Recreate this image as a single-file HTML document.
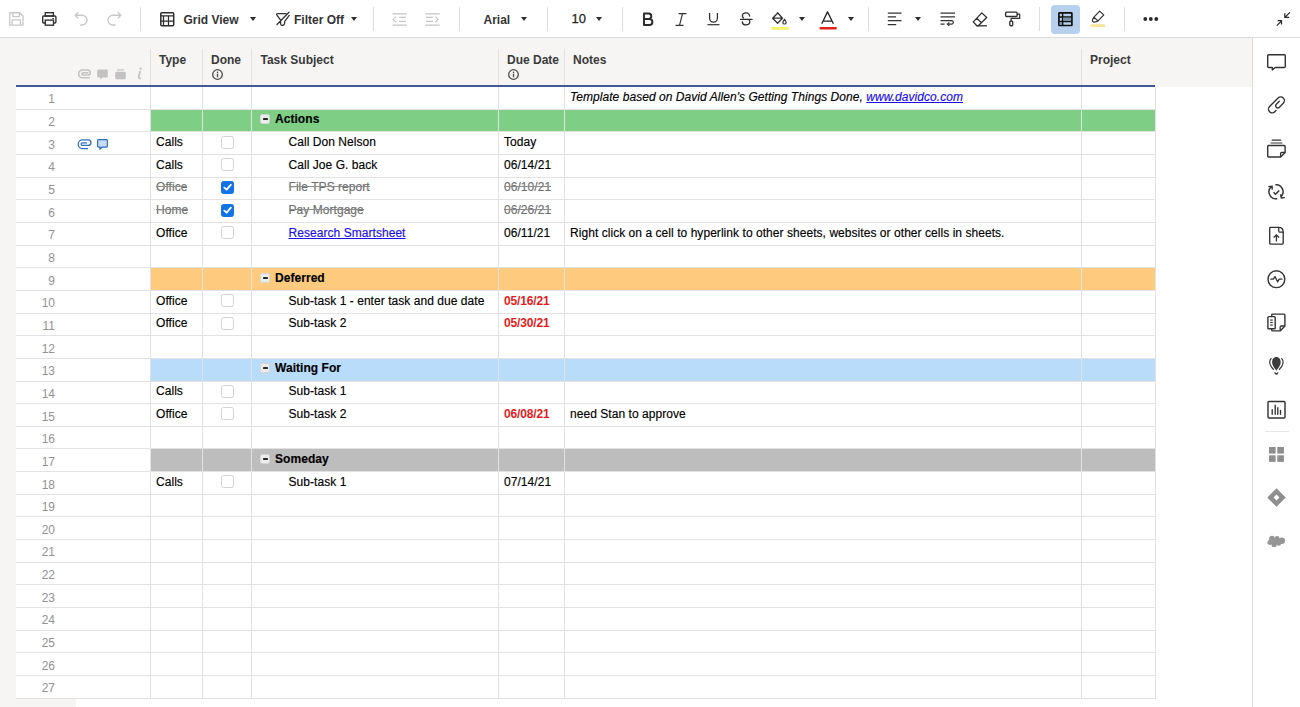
<!DOCTYPE html>
<html><head><meta charset="utf-8">
<style>
*{margin:0;padding:0;box-sizing:border-box}
html,body{width:1300px;height:707px;overflow:hidden;background:#fff;font-family:"Liberation Sans",sans-serif;position:relative}
.abs{position:absolute}
#tb{position:absolute;left:0;top:0;width:1300px;height:37px;background:#fff}
#tbb{position:absolute;left:0;top:37px;width:1300px;height:1px;background:#dcdcdc}
.sep{position:absolute;top:7px;width:1px;height:24px;background:#dddddd}
.tt{position:absolute;top:12.8px;font-size:12px;font-weight:bold;color:#333;line-height:14px;white-space:nowrap}
.dd{position:absolute;top:16.5px;width:0;height:0;border-left:3px solid transparent;border-right:3px solid transparent;border-top:4.2px solid #2d2d2d}
.ic{position:absolute}
#bgL{position:absolute;left:0;top:38px;width:1252px;height:669px;background:#f6f5f3}
#gridwhite{position:absolute;left:16px;top:87px;width:1236px;height:620px;background:#fff}
#gut{position:absolute;left:0;top:87px;width:16px;height:620px;background:#f6f5f3}
#botgut{position:absolute;left:0;top:699px;width:76px;height:8px;background:#f6f5f3}
#blue{position:absolute;left:16px;top:85px;width:1139px;height:2px;background:#425896}
.hdrt{position:absolute;top:52.7px;font-size:12px;font-weight:bold;color:#3a3a3a;line-height:14px;white-space:nowrap}
.hvl{position:absolute;top:49px;width:1px;height:36px;background:#e3e2df}
.info{position:absolute;top:69px;width:11px;height:11px;border:1.2px solid #555;border-radius:50%}
.info:after{content:"";position:absolute;left:3.6px;top:3.4px;width:1.3px;height:3.6px;background:#555}
.info:before{content:"";position:absolute;left:3.6px;top:1.6px;width:1.3px;height:1.1px;background:#555}
.bg{position:absolute;left:150px;width:1005px}
.hl{position:absolute;left:16px;width:1139px;height:1px;background:#e2e2e2}
.vl{position:absolute;top:87px;width:1px;height:612px;background:#e2e2e2}
.rn{position:absolute;left:0;width:55px;text-align:right;font-size:12px;color:#929292;line-height:14px}
.t{position:absolute;font-size:12px;color:#000;line-height:14px;white-space:nowrap;letter-spacing:0.05px;-webkit-text-stroke:0.15px currentColor}
.t.pt{font-weight:bold;color:#000}
.t.st{color:#6f6f6f}.t.st:after{content:"";position:absolute;left:0;right:0;top:6.2px;height:1px;background:#8c8c8c}
.t.red{color:#e31d1d;font-weight:bold;letter-spacing:-0.15px;-webkit-text-stroke:0}
.lnk{color:#1a0dea;text-decoration:underline}
.ck{position:absolute;left:221px;width:13px;height:13px;border:1px solid #d3d3d3;border-radius:2.5px;background:#fff}
.ck.on{background:#1173e6;border-color:#1173e6}
.ck svg{position:absolute;left:-1px;top:-1px}
.cbx{position:absolute;left:259.5px;width:10px;height:10px;background:#ececec;border:0.8px solid #d6d6d6;border-radius:2.2px}
.cbx b{position:absolute;left:2px;top:3.2px;width:5px;height:2px;background:#2a2a2a;border-radius:0.4px}
.ric{position:absolute}
#sb{position:absolute;left:1252px;top:38px;width:1px;height:669px;background:#dedede}
#sbw{position:absolute;left:1253px;top:38px;width:47px;height:669px;background:#fff}
.si{position:absolute;left:1266px}
</style></head><body>
<div id="bgL"></div>
<div id="gridwhite"></div>
<div id="gut"></div>
<div id="botgut"></div>

<div class="bg" style="top:109.2px;height:22.65px;background:#7ecf85"></div>
<div class="bg" style="top:267.75px;height:22.65px;background:#fdca7e"></div>
<div class="bg" style="top:358.35px;height:22.65px;background:#b8dcfa"></div>
<div class="bg" style="top:448.95px;height:22.65px;background:#bdbdbd"></div>
<div class="hl" style="top:108.7px"></div>
<div class="hl" style="top:131.35px"></div>
<div class="hl" style="top:154px"></div>
<div class="hl" style="top:176.65px"></div>
<div class="hl" style="top:199.3px"></div>
<div class="hl" style="top:221.95px"></div>
<div class="hl" style="top:244.6px"></div>
<div class="hl" style="top:267.25px"></div>
<div class="hl" style="top:289.9px"></div>
<div class="hl" style="top:312.55px"></div>
<div class="hl" style="top:335.2px"></div>
<div class="hl" style="top:357.85px"></div>
<div class="hl" style="top:380.5px"></div>
<div class="hl" style="top:403.15px"></div>
<div class="hl" style="top:425.8px"></div>
<div class="hl" style="top:448.45px"></div>
<div class="hl" style="top:471.1px"></div>
<div class="hl" style="top:493.75px"></div>
<div class="hl" style="top:516.4px"></div>
<div class="hl" style="top:539.05px"></div>
<div class="hl" style="top:561.7px"></div>
<div class="hl" style="top:584.35px"></div>
<div class="hl" style="top:607px"></div>
<div class="hl" style="top:629.65px"></div>
<div class="hl" style="top:652.3px"></div>
<div class="hl" style="top:674.95px"></div>
<div class="hl" style="top:697.6px"></div>
<div class="vl" style="left:150px"></div>
<div class="vl" style="left:202px"></div>
<div class="vl" style="left:251px"></div>
<div class="vl" style="left:498px"></div>
<div class="vl" style="left:564px"></div>
<div class="vl" style="left:1081px"></div>
<div class="vl" style="left:1155px"></div>

<div id="blue"></div>

<!-- header -->
<div class="hvl" style="left:150px"></div>
<div class="hvl" style="left:202px"></div>
<div class="hvl" style="left:251px"></div>
<div class="hvl" style="left:498px"></div>
<div class="hvl" style="left:564px"></div>
<div class="hvl" style="left:1081px"></div>
<div class="hdrt" style="left:159px">Type</div>
<div class="hdrt" style="left:211px">Done</div>
<div class="hdrt" style="left:260.5px">Task Subject</div>
<div class="hdrt" style="left:507px">Due Date</div>
<div class="hdrt" style="left:573px">Notes</div>
<div class="hdrt" style="left:1090px">Project</div>
<svg class="ic" style="left:212px;top:69px" width="11" height="11" viewBox="0 0 11 11"><circle cx="5.5" cy="5.5" r="4.8" fill="none" stroke="#4a4a4a" stroke-width="1.3"/><rect x="4.85" y="2.7" width="1.3" height="1.3" fill="#4a4a4a"/><rect x="4.85" y="4.7" width="1.3" height="3.6" fill="#4a4a4a"/></svg>
<svg class="ic" style="left:508px;top:69px" width="11" height="11" viewBox="0 0 11 11"><circle cx="5.5" cy="5.5" r="4.8" fill="none" stroke="#4a4a4a" stroke-width="1.3"/><rect x="4.85" y="2.7" width="1.3" height="1.3" fill="#4a4a4a"/><rect x="4.85" y="4.7" width="1.3" height="3.6" fill="#4a4a4a"/></svg>

<!-- header left icons -->
<svg class="ic" style="left:78px;top:68px" width="14" height="11" viewBox="0 0 14 11"><path d="M11.8 9.8 H4.6 A3.9 3.9 0 0 1 4.6 2 H9.8 A2.5 2.5 0 0 1 9.8 7 H5 A1.1 1.1 0 0 1 5 4.8 H10.3" fill="none" stroke="#c2c2c2" stroke-width="1.6"/></svg>
<svg class="ic" style="left:97px;top:68.5px" width="11" height="12" viewBox="0 0 11 12"><path d="M1 0.6 H10 A0.8 0.8 0 0 1 10.8 1.4 V7.6 A0.8 0.8 0 0 1 10 8.4 H5.4 L3.4 10.8 V8.4 H1 A0.8 0.8 0 0 1 0.2 7.6 V1.4 A0.8 0.8 0 0 1 1 0.6 Z" fill="#c2c2c2"/></svg>
<svg class="ic" style="left:115px;top:68.5px" width="11" height="11" viewBox="0 0 11 11"><rect x="2" y="0.3" width="7" height="1.2" fill="#c2c2c2"/><rect x="0.2" y="2.8" width="10.6" height="7.4" rx="1.2" fill="#c2c2c2"/></svg>
<svg class="ic" style="left:135px;top:66px" width="8" height="14" viewBox="0 0 8 14"><circle cx="5.6" cy="2.7" r="1.15" fill="#c2c2c2"/><path d="M5.1 5.6 L3.7 10.8 Q3.4 12.4 5.2 12.3" fill="none" stroke="#c2c2c2" stroke-width="1.75" stroke-linecap="round"/></svg>

<div class="rn" style="top:92.45px">1</div>
<div class="t" style="top:89.65px;left:570px"><i>Template based on David Allen's Getting Things Done, <u class="lnk">www.davidco.com</u></i></div>
<div class="rn" style="top:115.1px">2</div>
<div class="cbx" style="top:114.1px"><b></b></div>
<div class="t pt" style="top:112.3px;left:275px">Actions</div>
<div class="rn" style="top:137.75px">3</div>
<div class="t" style="top:134.95px;left:156px">Calls</div>
<div class="ck" style="top:135.65px"></div>
<div class="t" style="top:134.95px;left:288.5px">Call Don Nelson</div>
<div class="t" style="top:134.95px;left:504px">Today</div>
<svg class="ric" style="left:77px;top:138.85px" width="16" height="12" viewBox="0 0 16 12"><path d="M11 9.65 H5.5 A4.35 4.35 0 0 1 5.5 0.95 H11.2 A2.75 2.75 0 0 1 11.2 6.45 H5.5 A1.35 1.35 0 0 1 5.5 3.75 H10" fill="none" stroke="#2d6fc4" stroke-width="1.25"/></svg>
<svg class="ric" style="left:97px;top:138.85px" width="11" height="11" viewBox="0 0 11 11"><path d="M1.5 0.7 H9.5 A0.9 0.9 0 0 1 10.4 1.6 V7.2 A0.9 0.9 0 0 1 9.5 8.1 H5 L3 10.2 V8.1 H1.5 A0.9 0.9 0 0 1 0.6 7.2 V1.6 A0.9 0.9 0 0 1 1.5 0.7 Z" fill="#c9dcf3" stroke="#2d6fc4" stroke-width="1.2"/></svg>
<div class="rn" style="top:160.4px">4</div>
<div class="t" style="top:157.6px;left:156px">Calls</div>
<div class="ck" style="top:158.3px"></div>
<div class="t" style="top:157.6px;left:288.5px">Call Joe G. back</div>
<div class="t" style="top:157.6px;left:504px">06/14/21</div>
<div class="rn" style="top:183.05px">5</div>
<div class="t st" style="top:180.25px;left:156px">Office</div>
<div class="ck on" style="top:180.95px"><svg width="13" height="13" viewBox="0 0 13 13"><path d="M3.3 6.6 L5.6 8.7 L9.9 3.7" fill="none" stroke="#fff" stroke-width="1.8" stroke-linecap="round" stroke-linejoin="round"/></svg></div>
<div class="t st" style="top:180.25px;left:288.5px">File TPS report</div>
<div class="t st" style="top:180.25px;left:504px">06/10/21</div>
<div class="rn" style="top:205.7px">6</div>
<div class="t st" style="top:202.9px;left:156px">Home</div>
<div class="ck on" style="top:203.6px"><svg width="13" height="13" viewBox="0 0 13 13"><path d="M3.3 6.6 L5.6 8.7 L9.9 3.7" fill="none" stroke="#fff" stroke-width="1.8" stroke-linecap="round" stroke-linejoin="round"/></svg></div>
<div class="t st" style="top:202.9px;left:288.5px">Pay Mortgage</div>
<div class="t st" style="top:202.9px;left:504px">06/26/21</div>
<div class="rn" style="top:228.35px">7</div>
<div class="t" style="top:225.55px;left:156px">Office</div>
<div class="ck" style="top:226.25px"></div>
<div class="t" style="top:225.55px;left:288.5px"><u class="lnk">Research Smartsheet</u></div>
<div class="t" style="top:225.55px;left:504px">06/11/21</div>
<div class="t" style="top:225.55px;left:570px">Right click on a cell to hyperlink to other sheets, websites or other cells in sheets.</div>
<div class="rn" style="top:251px">8</div>
<div class="rn" style="top:273.65px">9</div>
<div class="cbx" style="top:272.65px"><b></b></div>
<div class="t pt" style="top:270.85px;left:275px">Deferred</div>
<div class="rn" style="top:296.3px">10</div>
<div class="t" style="top:293.5px;left:156px">Office</div>
<div class="ck" style="top:294.2px"></div>
<div class="t" style="top:293.5px;left:288.5px">Sub-task 1 - enter task and due date</div>
<div class="t red" style="top:293.5px;left:504px">05/16/21</div>
<div class="rn" style="top:318.95px">11</div>
<div class="t" style="top:316.15px;left:156px">Office</div>
<div class="ck" style="top:316.85px"></div>
<div class="t" style="top:316.15px;left:288.5px">Sub-task 2</div>
<div class="t red" style="top:316.15px;left:504px">05/30/21</div>
<div class="rn" style="top:341.6px">12</div>
<div class="rn" style="top:364.25px">13</div>
<div class="cbx" style="top:363.25px"><b></b></div>
<div class="t pt" style="top:361.45px;left:275px">Waiting For</div>
<div class="rn" style="top:386.9px">14</div>
<div class="t" style="top:384.1px;left:156px">Calls</div>
<div class="ck" style="top:384.8px"></div>
<div class="t" style="top:384.1px;left:288.5px">Sub-task 1</div>
<div class="rn" style="top:409.55px">15</div>
<div class="t" style="top:406.75px;left:156px">Office</div>
<div class="ck" style="top:407.45px"></div>
<div class="t" style="top:406.75px;left:288.5px">Sub-task 2</div>
<div class="t red" style="top:406.75px;left:504px">06/08/21</div>
<div class="t" style="top:406.75px;left:570px">need Stan to approve</div>
<div class="rn" style="top:432.2px">16</div>
<div class="rn" style="top:454.85px">17</div>
<div class="cbx" style="top:453.85px"><b></b></div>
<div class="t pt" style="top:452.05px;left:275px">Someday</div>
<div class="rn" style="top:477.5px">18</div>
<div class="t" style="top:474.7px;left:156px">Calls</div>
<div class="ck" style="top:475.4px"></div>
<div class="t" style="top:474.7px;left:288.5px">Sub-task 1</div>
<div class="t" style="top:474.7px;left:504px">07/14/21</div>
<div class="rn" style="top:500.15px">19</div>
<div class="rn" style="top:522.8px">20</div>
<div class="rn" style="top:545.45px">21</div>
<div class="rn" style="top:568.1px">22</div>
<div class="rn" style="top:590.75px">23</div>
<div class="rn" style="top:613.4px">24</div>
<div class="rn" style="top:636.05px">25</div>
<div class="rn" style="top:658.7px">26</div>
<div class="rn" style="top:681.35px">27</div>

<!-- toolbar -->
<div id="tb"></div>
<div id="tbb"></div>
<!-- save -->
<svg class="ic" style="left:9px;top:12px" width="15" height="15" viewBox="0 0 15 15"><path d="M0.75 0.75 H10.5 L14 4.2 V13.1 H0.75 Z" fill="none" stroke="#c8c8c8" stroke-width="1.3" stroke-linejoin="round"/><path d="M3.9 0.75 V4.6 H10.4 V0.75 M3.2 13.1 V7.8 H11.4 V13.1" fill="none" stroke="#c8c8c8" stroke-width="1.3"/></svg>
<!-- print -->
<svg class="ic" style="left:41.5px;top:12px" width="15" height="15" viewBox="0 0 15 15"><rect x="3.3" y="0.7" width="8.1" height="3.3" fill="none" stroke="#333" stroke-width="1.4"/><path d="M3 11 H1.6 A0.9 0.9 0 0 1 0.7 10.1 V4.9 A0.9 0.9 0 0 1 1.6 4 H13 A0.9 0.9 0 0 1 13.9 4.9 V10.1 A0.9 0.9 0 0 1 13 11 H11.6" fill="none" stroke="#333" stroke-width="1.4"/><rect x="3.3" y="8.1" width="8.2" height="5.1" fill="#fff" stroke="#333" stroke-width="1.4"/><rect x="10.3" y="6.1" width="1.7" height="0.9" fill="#333"/></svg>
<!-- undo -->
<svg class="ic" style="left:74px;top:12px" width="16" height="16" viewBox="0 0 16 16"><path d="M1.3 3.25 H8.2 A4.875 4.875 0 0 1 8.2 13 H6.2 M4.2 0.3 L1.2 3.25 L4.2 6.2" fill="none" stroke="#c8c8c8" stroke-width="1.35"/></svg>
<!-- redo -->
<svg class="ic" style="left:107px;top:12px" width="16" height="16" viewBox="0 0 16 16"><path d="M13.7 3.25 H5.8 A4.875 4.875 0 0 0 5.8 13 H8.5 M10.8 0.3 L13.8 3.25 L10.8 6.2" fill="none" stroke="#c8c8c8" stroke-width="1.35"/></svg>
<div class="sep" style="left:140px"></div>
<!-- grid view -->
<svg class="ic" style="left:160px;top:12px" width="15" height="15" viewBox="0 0 15 15"><rect x="0.8" y="0.8" width="12.9" height="12.9" rx="1" fill="none" stroke="#2d2d2d" stroke-width="1.5"/><path d="M0.8 3.9 H13.7 M0.8 9.1 H13.7 M3.5 3.9 V13.7 M8.5 3.9 V13.7" stroke="#2d2d2d" stroke-width="1.3"/></svg>
<div class="tt" style="left:183.5px">Grid View</div>
<div class="dd" style="left:249.5px"></div>
<!-- filter off -->
<svg class="ic" style="left:270px;top:5px" width="30" height="30" viewBox="0 0 30 30"><path d="M16 8.6 H7.6 Q6.2 8.6 6.8 9.8 L10.6 15.2 V19 Q10.8 20.6 12.4 20.5 Q14.6 20.2 14.6 18.6 V16.6 L19.2 10.4 M7 19.5 L19 7.3" fill="none" stroke="#333" stroke-width="1.3" stroke-linejoin="round" stroke-linecap="round"/></svg>
<div class="tt" style="left:294px">Filter Off</div>
<div class="dd" style="left:350.5px"></div>
<div class="sep" style="left:373px"></div>
<!-- outdent / indent -->
<svg class="ic" style="left:392px;top:12.5px" width="15" height="14" viewBox="0 0 15 14"><path d="M0.6 0.9 H14.7 M7 4.4 H13.9 M7 8.4 H13.9 M0.6 12.1 H14.7" stroke="#c6c6c6" stroke-width="1.1"/><path d="M3.8 3.6 L1.2 6.4 L3.8 9.3" fill="none" stroke="#c6c6c6" stroke-width="1.1"/></svg>
<svg class="ic" style="left:425px;top:12.5px" width="15" height="14" viewBox="0 0 15 14"><path d="M0.2 0.9 H14.7 M0.9 4.4 H8 M0.9 8.4 H8 M0.2 12.1 H14.7" stroke="#c6c6c6" stroke-width="1.1"/><path d="M10.4 3.6 L13.1 6.4 L10.4 9.3" fill="none" stroke="#c6c6c6" stroke-width="1.1"/></svg>
<div class="sep" style="left:458.5px"></div>
<div class="tt" style="left:483.5px">Arial</div>
<div class="dd" style="left:521px"></div>
<div class="sep" style="left:546.5px"></div>
<div class="tt" style="left:571.5px;font-weight:normal;font-size:13px;top:12.3px;color:#222;-webkit-text-stroke:0.25px #222">10</div>
<div class="dd" style="left:596px"></div>
<div class="sep" style="left:622px"></div>
<!-- B I U S -->
<svg class="ic" style="left:635px;top:5px" width="30" height="30" viewBox="0 0 30 30"><path d="M13.6 13.9 A2.7 2.7 0 0 0 13.6 8.5 H9 V19.9 H14.4 A3 3 0 0 0 14.4 13.9 H9" fill="none" stroke="#2a2a2a" stroke-width="1.95" stroke-linejoin="round"/></svg>
<svg class="ic" style="left:675px;top:12.5px" width="12" height="13" viewBox="0 0 12 13"><path d="M3.5 0.6 H11.5 M0.5 12.4 H8.5 M7.5 0.6 L4.5 12.4" stroke="#333" stroke-width="1.2"/></svg>
<svg class="ic" style="left:707px;top:13px" width="13" height="13" viewBox="0 0 13 13"><path d="M2.6 0 V5.2 A3.9 3.9 0 0 0 10.4 5.2 V0" fill="none" stroke="#333" stroke-width="1.3"/><path d="M0.5 11.7 H12.5" stroke="#333" stroke-width="1.2"/></svg>
<svg class="ic" style="left:735px;top:5px" width="30" height="30" viewBox="0 0 30 30"><path d="M14.6 11.1 A3.6 3.1 0 0 0 7.4 10.9 Q7.4 12.2 8.6 12.9 M7.3 16.9 A3.75 3.1 0 0 0 14.8 16.7 Q14.8 15.9 14.3 15.3" fill="none" stroke="#2d2d2d" stroke-width="1.3" stroke-linecap="round"/><path d="M5.5 14.4 H17" stroke="#2d2d2d" stroke-width="1.2" stroke-linecap="round"/></svg>
<!-- fill color -->
<svg class="ic" style="left:765px;top:5px" width="30" height="30" viewBox="0 0 30 30"><path d="M12.2 7.2 L17.5 13.3 L12.6 18.2 L7.6 13.2 L12.3 8.5 M8.4 13.2 H16.7" fill="none" stroke="#333" stroke-width="1.3" stroke-linejoin="round"/><path d="M19.5 14.4 Q17.9 16.4 17.9 17.4 A1.6 1.6 0 0 0 21.1 17.4 Q21.1 16.4 19.5 14.4 Z" fill="none" stroke="#333" stroke-width="1.2"/><rect x="6.4" y="22" width="17.4" height="2.8" fill="#f5f26e"/></svg>
<div class="dd" style="left:799px"></div>
<!-- text color -->
<svg class="ic" style="left:819px;top:11px" width="18" height="19" viewBox="0 0 18 19"><path d="M2.8 12.7 L8.5 0.9 L14.4 12.7 M4.2 10.1 H13" fill="none" stroke="#222" stroke-width="1.3" stroke-linejoin="round"/><rect x="0.6" y="16" width="17" height="2.6" rx="0.4" fill="#e3211c"/></svg>
<div class="dd" style="left:847.5px"></div>
<div class="sep" style="left:868px"></div>
<!-- align -->
<svg class="ic" style="left:887px;top:12px" width="15" height="14" viewBox="0 0 15 14"><path d="M0.8 1.1 H14.5 M0.8 4.9 H9 M0.8 8.6 H14.5 M0.8 12.6 H9.2" stroke="#333" stroke-width="1.2"/></svg>
<div class="dd" style="left:915px"></div>
<!-- wrap -->
<svg class="ic" style="left:939.5px;top:12px" width="16" height="15" viewBox="0 0 16 15"><path d="M0.5 1.1 H15 M0.5 4.9 H15 M0.5 8.6 H12 M0.5 12.2 H4.5" stroke="#333" stroke-width="1.2"/><path d="M11.5 8.6 A1.8 1.8 0 0 1 11.5 12.2 H7.6" fill="none" stroke="#333" stroke-width="1.2"/><path d="M9.3 10.5 L7.5 12.2 L9.3 13.9" fill="none" stroke="#333" stroke-width="1.2"/></svg>
<!-- eraser -->
<svg class="ic" style="left:972px;top:11.5px" width="17" height="16" viewBox="0 0 17 16"><path d="M9.8 0.9 L14.7 5.5 L6.3 13.8 H4.8 L1.3 9.9 Z M5 6.4 L9.4 10.8" fill="none" stroke="#2d2d2d" stroke-width="1.3" stroke-linejoin="round"/><path d="M5.2 13.8 H14.9" stroke="#2d2d2d" stroke-width="1.3"/></svg>
<!-- paint roller -->
<svg class="ic" style="left:1004px;top:11px" width="17" height="16" viewBox="0 0 17 16"><rect x="1.6" y="1.15" width="11.5" height="4.35" rx="0.9" fill="none" stroke="#2d2d2d" stroke-width="1.35"/><path d="M13.1 3.2 H15.7 V7.4 H7.1 V10.1" fill="none" stroke="#2d2d2d" stroke-width="1.2" stroke-linejoin="round"/><rect x="5.8" y="10.15" width="2.9" height="4.6" rx="0.8" fill="none" stroke="#2d2d2d" stroke-width="1.3"/></svg>
<div class="sep" style="left:1038.5px"></div>
<!-- active grid button -->
<div class="abs" style="left:1050.5px;top:4.5px;width:29px;height:29px;background:#b6d0ee;border-radius:4px"></div>
<svg class="ic" style="left:1057.5px;top:12px" width="15" height="15" viewBox="0 0 15 15"><rect x="0.9" y="0.9" width="13" height="12.6" rx="0.6" fill="none" stroke="#111" stroke-width="1.7"/><path d="M0.9 4.9 H13.9 M0.9 9.4 H13.9 M4.6 0.9 V13.5" stroke="#111" stroke-width="1.5"/><rect x="5.4" y="5.7" width="7.7" height="3" fill="#7d8ea8"/><rect x="1.7" y="10.2" width="2.1" height="2.5" fill="#7d8ea8"/></svg>
<!-- highlight -->
<svg class="ic" style="left:1090px;top:10px" width="16" height="18" viewBox="0 0 16 18"><path d="M9.6 1.1 L13.8 4.9 L8.1 10.9 L3.8 7.3 Z M3.9 7.4 L2.4 9.9 Q2.1 11.5 3.8 12.2 L6.4 11.6 L8 10.9" fill="none" stroke="#333" stroke-width="1.2" stroke-linejoin="round"/><rect x="0.4" y="14.3" width="14.6" height="2.7" rx="0.5" fill="#fce596"/></svg>
<div class="sep" style="left:1124px"></div>
<!-- more -->
<svg class="ic" style="left:1142.5px;top:17px" width="16" height="5" viewBox="0 0 16 5"><circle cx="2.3" cy="2" r="1.9" fill="#2a2a2a"/><circle cx="7.8" cy="2" r="1.9" fill="#2a2a2a"/><circle cx="13.3" cy="2" r="1.9" fill="#2a2a2a"/></svg>
<!-- collapse -->
<svg class="ic" style="left:1275.5px;top:12px" width="15" height="15" viewBox="0 0 15 15"><path d="M13.9 0.4 L9.2 5.1 M8.8 1.2 V5.4 H13.2" fill="none" stroke="#2a2a2a" stroke-width="1.25"/><path d="M0.8 13.6 L5.3 9.1 M1.6 8.6 H5.5 V12.6" fill="none" stroke="#2a2a2a" stroke-width="1.25"/></svg>

<!-- sidebar -->
<div id="sbw"></div>
<div id="sb"></div>

<!-- comment -->
<svg class="ic" style="left:1267px;top:54px" width="19" height="17" viewBox="0 0 19 17"><path d="M1.6 0.8 H17.4 A0.9 0.9 0 0 1 18.3 1.7 V12.6 A0.9 0.9 0 0 1 17.4 13.5 H8.2 L5.3 15.9 V13.5 H1.6 A0.9 0.9 0 0 1 0.7 12.6 V1.7 A0.9 0.9 0 0 1 1.6 0.8 Z" fill="none" stroke="#333" stroke-width="1.4" stroke-linejoin="round"/></svg>
<!-- attachment -->
<svg class="ic" style="left:1262px;top:90px" width="30" height="30" viewBox="0 0 30 30"><path transform="matrix(0.7071 -0.7071 0.7071 0.7071 10.2 19.1)" d="M10.6 -0.6 L6.4 -0.6 A2.15 2.15 0 0 0 6.4 3.7 L12 3.7 A3.7 3.7 0 0 0 12 -3.7 L0 -3.7 A3.7 3.7 0 0 0 0 3.7 L1.6 3.7" fill="none" stroke="#333" stroke-width="1.4" stroke-linecap="round"/></svg>
<!-- proofs -->
<svg class="ic" style="left:1267px;top:139px" width="19" height="20" viewBox="0 0 19 20"><path d="M5.2 1.2 H13.7 M4.1 4.0 H14.9" stroke="#333" stroke-width="1.2" stroke-linecap="round"/><path d="M1.6 6.5 H17.2 A0.9 0.9 0 0 1 18.1 7.4 V13.5 L13.6 18 H1.6 A0.9 0.9 0 0 1 0.7 17.1 V7.4 A0.9 0.9 0 0 1 1.6 6.5 Z" fill="none" stroke="#333" stroke-width="1.4" stroke-linejoin="round"/><path d="M18.1 13.5 H14.5 A0.9 0.9 0 0 0 13.6 14.4 V18" fill="none" stroke="#333" stroke-width="1.3"/></svg>
<!-- update requests -->
<svg class="ic" style="left:1262px;top:178px" width="30" height="30" viewBox="0 0 30 30"><path d="M15.2 20.7 A7 7 0 0 1 9.5 8.44 M6.4 8.6 L10 8.2 L10.3 11.6 M13.4 6.8 A7 7 0 0 1 18.5 19.16 M18.5 16.4 L19.4 19.9 L22.8 19.5 M11.5 14.2 L13.6 16.2 L17.2 12.5" fill="none" stroke="#333" stroke-width="1.45"/></svg>
<!-- upload -->
<svg class="ic" style="left:1269px;top:226px" width="15" height="19" viewBox="0 0 15 19"><path d="M1.5 1.3 H9.6 Q14.2 1.3 14.2 5.9 V17.3 A0.8 0.8 0 0 1 13.4 18.1 H1.5 A0.8 0.8 0 0 1 0.7 17.3 V2.1 A0.8 0.8 0 0 1 1.5 1.3 Z" fill="none" stroke="#333" stroke-width="1.35" stroke-linejoin="round"/><path d="M9.7 1.3 V5.3 A0.7 0.7 0 0 0 10.4 6 H14.2" fill="none" stroke="#333" stroke-width="1.25"/><path d="M7.4 15.6 V8.9 M4.7 11.5 L7.4 8.8 L10.1 11.5" fill="none" stroke="#333" stroke-width="1.3"/></svg>
<!-- activity -->
<svg class="ic" style="left:1267px;top:270px" width="19" height="19" viewBox="0 0 19 19"><circle cx="9.4" cy="9.2" r="8.4" fill="none" stroke="#333" stroke-width="1.4"/><path d="M3.3 9.2 H6.3 L8 6.6 L10.6 11.8 L12.2 9.2 H15.5" fill="none" stroke="#333" stroke-width="1.3" stroke-linejoin="round"/></svg>
<!-- summary -->
<svg class="ic" style="left:1262px;top:308px" width="30" height="30" viewBox="0 0 30 30"><path d="M9.75 8.6 V7 A0.9 0.9 0 0 1 10.65 6.1 H22 A0.9 0.9 0 0 1 22.9 7 V18 L18.2 22.9 H10.65 A0.9 0.9 0 0 1 9.75 22 V20.8" fill="none" stroke="#333" stroke-width="1.4" stroke-linejoin="round"/><path d="M22.9 18 H19.1 A0.9 0.9 0 0 0 18.2 18.9 V22.9" fill="none" stroke="#333" stroke-width="1.3"/><rect x="5.9" y="8.6" width="7.3" height="12.2" rx="0.9" fill="#fff" stroke="#333" stroke-width="1.4"/><rect x="8.2" y="11.5" width="2.5" height="1.2" fill="#333"/><rect x="8.2" y="13.9" width="2.5" height="1.2" fill="#333"/><rect x="8.2" y="16.5" width="2.5" height="1.2" fill="#333"/></svg>
<!-- publish balloon -->
<svg class="ic" style="left:1262px;top:352px" width="30" height="30" viewBox="0 0 30 30"><path d="M14.4 5.1 C11.6 5.1 10.1 7.5 10.1 10.3 C10.1 13.6 13 16.6 14.4 18.7 C15.8 16.6 18.7 13.6 18.7 10.3 C18.7 7.5 17.2 5.1 14.4 5.1 Z" fill="#3d3d3d"/><path d="M9.4 6.3 C7 8.6 6.6 12.6 11.8 17.8 M19.4 6.3 C21.8 8.6 22.2 12.6 17 17.8" fill="none" stroke="#3d3d3d" stroke-width="1.25"/><path d="M12.4 20.1 L14.4 20.9 L16.4 20.1 L16.1 22.1 Q14.4 23.5 12.7 22.1 Z" fill="#3d3d3d"/></svg>
<!-- chart -->
<svg class="ic" style="left:1262px;top:395px" width="30" height="30" viewBox="0 0 30 30"><rect x="6" y="6.5" width="17" height="16.5" rx="1" fill="none" stroke="#333" stroke-width="1.45"/><path d="M10.2 19.2 V14.6 M13.2 19.2 V10.2 M15.8 19.2 V12.7 M18.5 19.2 V15.5" stroke="#333" stroke-width="1.35" stroke-linecap="round"/></svg>
<div class="abs" style="left:1264.5px;top:431px;width:24px;height:1px;background:#e6e6e6"></div>
<!-- apps grid -->
<svg class="ic" style="left:1269px;top:447px" width="15" height="15" viewBox="0 0 15 15"><rect x="0" y="0" width="6.6" height="6.6" fill="#8e8e8e"/><rect x="8.3" y="0" width="6.6" height="6.6" fill="#8e8e8e"/><rect x="0" y="8.3" width="6.6" height="6.6" fill="#8e8e8e"/><rect x="8.3" y="8.3" width="6.6" height="6.6" fill="#8e8e8e"/></svg>
<!-- diamond -->
<svg class="ic" style="left:1267px;top:488px" width="19" height="19" viewBox="0 0 19 19"><path d="M9.5 0.3 L18.7 9.5 L9.5 18.7 L0.3 9.5 Z" fill="#8e8e8e"/><path d="M9.5 6.6 L12.4 9.5 L9.5 12.4 L6.6 9.5 Z" fill="#fff"/></svg>
<!-- cloud -->
<svg class="ic" style="left:1262px;top:526px" width="30" height="30" viewBox="0 0 30 30"><g fill="#969696"><circle cx="10" cy="12.7" r="2.9"/><circle cx="15.1" cy="12.2" r="2.3"/><circle cx="19.7" cy="14.7" r="3.3"/><circle cx="7.7" cy="16.5" r="2.4"/><circle cx="12.1" cy="18.4" r="2.7"/><circle cx="16.8" cy="17.5" r="2.3"/><ellipse cx="13.6" cy="15.3" rx="6" ry="3.4"/></g></svg>
</body></html>
